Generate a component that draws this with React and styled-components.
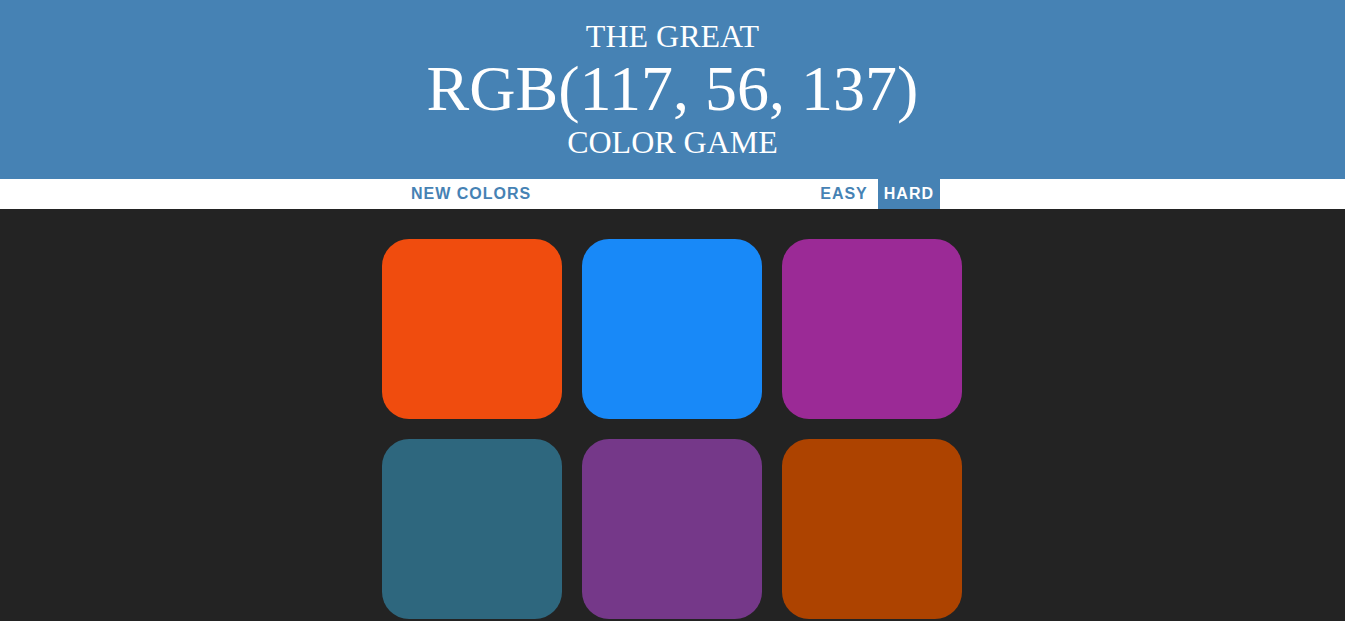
import React, { useState } from 'react'
import styled, { createGlobalStyle } from 'styled-components'

const GlobalStyle = createGlobalStyle`
  body {
    margin: 0;
    background-color: #232323;
    font-family: "Liberation Serif", "Times New Roman", serif;
  }
`

const COLORS = [
  'rgb(240, 76, 14)',
  'rgb(24, 137, 248)',
  'rgb(155, 42, 150)',
  'rgb(46, 103, 126)',
  'rgb(117, 56, 137)',
  'rgb(173, 67, 0)',
]

const Title = styled.h1`
  margin: 0;
  padding: 19px 0;
  background: steelblue;
  color: white;
  text-align: center;
  text-transform: uppercase;
  font-weight: normal;
  font-size: 32px;
  line-height: 1.1;
`

const ColorDisplay = styled.span`
  font-size: 200%;
`

const Stripe = styled.div`
  background: white;
  height: 30px;
  text-align: center;
  color: black;
`

const StripeButton = styled.button`
  border: none;
  background: ${(p) => (p.$selected ? 'steelblue' : 'none')};
  color: ${(p) => (p.$selected ? 'white' : 'steelblue')};
  text-transform: uppercase;
  height: 100%;
  padding: 1px 6px;
  font-family: "Liberation Sans", Arial, sans-serif;
  font-weight: 700;
  font-size: 16px;
  letter-spacing: 1px;
  outline: none;
  cursor: pointer;
  vertical-align: top;
`

const Message = styled.span`
  display: inline-block;
  width: 20%;
`

const Container = styled.div`
  max-width: 600px;
  margin: 20px auto;
  display: flex;
  flex-wrap: wrap;
`

const Square = styled.div`
  width: 30%;
  padding-bottom: 30%;
  margin: 1.66%;
  border-radius: 15%;
  background: ${(p) => p.$color};
`

const App = () => {
  const [mode, setMode] = useState('hard')
  return (
    <>
      <GlobalStyle />
      <Title>
        The Great
        <br />
        <ColorDisplay>RGB(117, 56, 137)</ColorDisplay>
        <br />
        Color Game
      </Title>
      <Stripe>
        <StripeButton>New Colors</StripeButton>{' '}
        <Message />{' '}
        <StripeButton $selected={mode === 'easy'} onClick={() => setMode('easy')}>
          Easy
        </StripeButton>{' '}
        <StripeButton $selected={mode === 'hard'} onClick={() => setMode('hard')}>
          Hard
        </StripeButton>
      </Stripe>
      <Container>
        {COLORS.map((c) => (
          <Square key={c} $color={c} />
        ))}
      </Container>
    </>
  )
}

export default App
